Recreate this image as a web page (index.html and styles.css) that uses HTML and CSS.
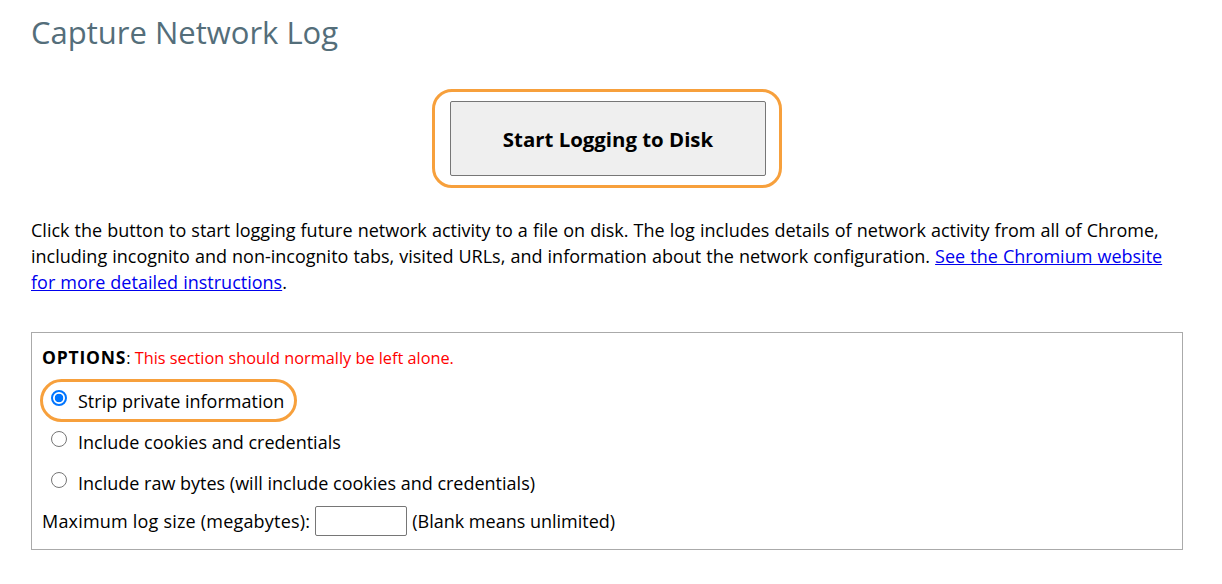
FILE: index.html
```html
<!DOCTYPE html>
<html>
<head>
<meta charset="utf-8">
<title>Capture Network Log</title>
<link rel="stylesheet" href="styles.css">
</head>
<body>
<main class="page">
  <h1 class="title">Capture Network Log</h1>
  <div class="start-wrap">
    <div class="highlight-btn">
      <button class="start-btn">Start Logging to Disk</button>
    </div>
  </div>
  <p class="desc">Click the button to start logging future network activity to a file on disk. The log includes details of network activity from all of Chrome, including incognito and non-incognito tabs, visited URLs, and information about the network configuration. <a href="#">See the Chromium website for more detailed instructions</a>.</p>
  <section class="options">
    <div class="opt-head"><b>OPTIONS</b>: <span class="warn">This section should normally be left alone.</span></div>
    <div class="opt-row highlight-row">
      <label class="radio-label"><span class="radio checked"></span>Strip private information</label>
    </div>
    <div class="opt-row">
      <label class="radio-label"><span class="radio"></span>Include cookies and credentials</label>
    </div>
    <div class="opt-row">
      <label class="radio-label"><span class="radio"></span>Include raw bytes (will include cookies and credentials)</label>
    </div>
    <div class="size-row">
      <span class="size-label">Maximum log size (megabytes):</span>
      <span class="size-input"></span>
      <span>(Blank means unlimited)</span>
    </div>
  </section>
</main>
</body>
</html>
```

FILE: styles.css
```css
html, body {
  margin: 0;
  padding: 0;
  background: #fff;
}
body {
  font-family: "Open Sans", "Noto Sans", sans-serif;
  color: #000;
}
.page {
  width: 1152px;
  padding: 0 0 0 31px;
}
.title {
  margin: 0;
  padding-top: 12px;
  font-size: 31px;
  line-height: 40px;
  font-weight: 400;
  color: #546e7a;
}
.start-wrap {
  display: flex;
  justify-content: center;
  margin-top: 37px;
}
.highlight-btn {
  border: 3px solid #f7a03c;
  border-radius: 20px;
  padding: 9px 13px 9px 15px;
}
.start-btn {
  display: block;
  width: 316px;
  height: 75px;
  background: #efefef;
  border: 1px solid #767676;
  border-radius: 2px;
  font-family: "Open Sans", "Noto Sans", sans-serif;
  font-size: 20.4px;
  font-weight: 700;
  color: #000;
  padding: 0;
}
.desc {
  margin: 29px 0 0;
  font-size: 18px;
  line-height: 26px;
  word-spacing: 0.4px;
}
.desc a {
  color: #0000ee;
}
.options {
  display: flex;
  flex-direction: column;
  margin-top: 37px;
  border: 1px solid #aaaaaa;
  padding: 12px 10px 13px;
  font-size: 18px;
}
.opt-head {
  font-size: 16.3px;
  line-height: 24px;
}
.opt-head b {
  font-size: 17.5px;
  font-weight: 700;
  letter-spacing: 0.8px;
}
.warn {
  color: #ff0000;
}
.opt-row {
  display: flex;
  margin-top: 17px;
  height: 24px;
  align-items: center;
}
.radio-label {
  display: flex;
  align-items: center;
  line-height: 24px;
}
.radio {
  flex: none;
  width: 16px;
  height: 16px;
  border: 1.5px solid #767676;
  border-radius: 50%;
  margin: 0 11px 0 9px;
  box-sizing: border-box;
  position: relative;
  top: -3px;
}
.radio.checked {
  border: 2px solid #0075ff;
  background: radial-gradient(circle, #0075ff 0 4px, #fff 4.6px);
}
.highlight-row {
  margin-top: 9px;
  margin-left: -2px;
  align-self: flex-start;
  border: 3px solid #f7a03c;
  border-radius: 22px;
  height: 37px;
  padding: 0 10px 0 0;
}
.highlight-row .radio {
  margin-left: 8px;
}
.highlight-row + .opt-row {
  margin-top: 8px;
}
.size-row {
  display: flex;
  align-items: center;
  gap: 5px;
  margin-top: 11px;
}
.size-label {
  letter-spacing: 0.2px;
}
.size-input {
  display: inline-block;
  width: 90px;
  height: 28px;
  border: 1px solid #767676;
  border-radius: 2px;
}
```
